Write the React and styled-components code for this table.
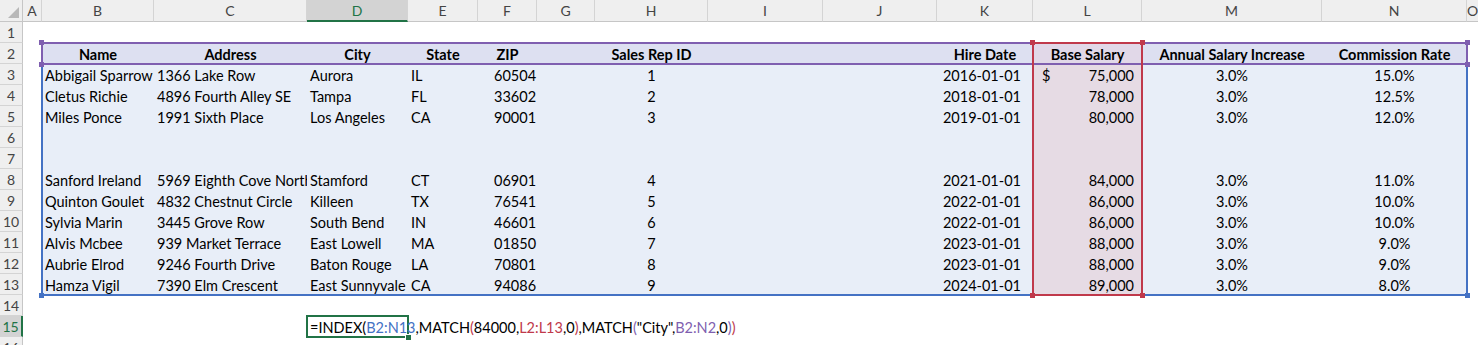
import React from 'react';
import styled, { createGlobalStyle, css } from 'styled-components';

const GlobalStyle = createGlobalStyle`
  body {
    margin: 0;
    background: #fff;
    font-family: 'Lato', 'Liberation Sans', sans-serif;
    color: #000;
  }
`;

// column widths: row numbers, then A..O
const COL_WIDTHS = [23, 19, 112, 153, 101, 70, 59, 58, 113, 115, 114, 96, 109, 180, 145];
const LETTERS = ['A', 'B', 'C', 'D', 'E', 'F', 'G', 'H', 'I', 'J', 'K', 'L', 'M', 'N', 'O'];

const BLUE = '#4472c4';
const RED = '#c0394b';
const PURPLE = '#7f5fb0';
const EXCEL_GREEN = '#217346';

const gridTracks = css`
  display: grid;
  grid-template-columns: ${COL_WIDTHS.map((w) => `${w}px`).join(' ')} 1fr;
  grid-template-rows: 22px;
  grid-auto-rows: 21px;
`;

const Viewport = styled.div`
  position: relative;
  width: 1478px;
  height: 345px;
  overflow: hidden;
`;

const Sheet = styled.div`
  ${gridTracks}
  font-size: 14.5px;
`;

// range outlines and the selection sit on a second grid laid over the cells
const OverlayGrid = styled.div`
  ${gridTracks}
  position: absolute;
  inset: 0;
  pointer-events: none;
`;

const Corner = styled.div`
  position: relative;
  background: #efefef;
  border-right: 1px solid #c6c6c6;
  border-bottom: 1px solid #c6c6c6;
  &::after {
    content: '';
    position: absolute;
    right: 3px;
    bottom: 3px;
    border-left: 11px solid transparent;
    border-bottom: 11px solid #b8b8b8;
  }
`;

const ColHead = styled.div`
  display: flex;
  align-items: center;
  justify-content: center;
  background: ${(p) => (p.$active ? '#d3d3d3' : '#efefef')};
  color: ${(p) => (p.$active ? EXCEL_GREEN : '#444')};
  border-right: 1px solid #d4d4d4;
  border-bottom: ${(p) => (p.$active ? `2px solid ${EXCEL_GREEN}` : '1px solid #c6c6c6')};
  font-size: 14px;
`;

const RowHead = styled.div`
  display: flex;
  align-items: center;
  justify-content: center;
  background: ${(p) => (p.$active ? '#d3d3d3' : '#efefef')};
  color: ${(p) => (p.$active ? EXCEL_GREEN : '#444')};
  border-right: ${(p) => (p.$active ? `2px solid ${EXCEL_GREEN}` : '1px solid #c6c6c6')};
  border-bottom: 1px solid #d4d4d4;
  font-size: 14px;
  box-sizing: border-box;
`;

const Cell = styled.div`
  display: flex;
  align-items: center;
  justify-content: ${(p) => p.$align || 'flex-start'};
  padding: 1px ${(p) => p.$padR ?? 3}px 0 ${(p) => p.$padL ?? 3}px;
  background: ${(p) => p.$fill || 'transparent'};
  font-weight: ${(p) => (p.$bold ? 700 : 400)};
  white-space: nowrap;
  overflow: hidden;
  min-width: 0;
  box-sizing: border-box;
`;

const FormulaCell = styled.div`
  position: relative;
  z-index: 1;
  display: flex;
  align-items: center;
  padding: 1px 0 0 3px;
  white-space: nowrap;
`;

const Accounting = styled(Cell)`
  justify-content: space-between;
  padding: 1px 8px 0 9px;
`;

const Ref = styled.span`
  color: ${(p) => p.$color};
`;

const RangeBox = styled.div`
  position: relative;
  grid-column: ${(p) => p.$cols};
  grid-row: ${(p) => p.$rows};
  &::before {
    content: '';
    position: absolute;
    inset: -1px;
    border: 2px solid ${(p) => p.$color};
  }
`;

const Handle = styled.span`
  position: absolute;
  z-index: 1;
  width: 5px;
  height: 5px;
  background: ${(p) => p.$color};
  ${(p) => (p.$top ? 'top: -3px;' : 'bottom: -3px;')}
  ${(p) => (p.$left ? 'left: -3px;' : 'right: -3px;')}
`;

const ActiveCell = styled.div`
  position: relative;
  grid-column: 5 / 6;
  grid-row: 16 / 17;
  &::before {
    content: '';
    position: absolute;
    inset: -1px;
    border: 2px solid ${EXCEL_GREEN};
  }
`;

const FillHandle = styled.span`
  position: absolute;
  right: -4px;
  bottom: -4px;
  width: 5px;
  height: 5px;
  background: ${EXCEL_GREEN};
  border: 1px solid #fff;
`;

const HEADERS = ['Name', 'Address', 'City', 'State', 'ZIP', '', 'Sales Rep ID', '', '', 'Hire Date', 'Base Salary', 'Annual Salary Increase', 'Commission Rate'];

const PEOPLE = [
  ['Abbigail Sparrow', '1366 Lake Row', 'Aurora', 'IL', '60504', '1', '2016-01-01', '75,000', '3.0%', '15.0%'],
  ['Cletus Richie', '4896 Fourth Alley SE', 'Tampa', 'FL', '33602', '2', '2018-01-01', '78,000', '3.0%', '12.5%'],
  ['Miles Ponce', '1991 Sixth Place', 'Los Angeles', 'CA', '90001', '3', '2019-01-01', '80,000', '3.0%', '12.0%'],
  null,
  null,
  ['Sanford Ireland', '5969 Eighth Cove North', 'Stamford', 'CT', '06901', '4', '2021-01-01', '84,000', '3.0%', '11.0%'],
  ['Quinton Goulet', '4832 Chestnut Circle', 'Killeen', 'TX', '76541', '5', '2022-01-01', '86,000', '3.0%', '10.0%'],
  ['Sylvia Marin', '3445 Grove Row', 'South Bend', 'IN', '46601', '6', '2022-01-01', '86,000', '3.0%', '10.0%'],
  ['Alvis Mcbee', '939 Market Terrace', 'East Lowell', 'MA', '01850', '7', '2023-01-01', '88,000', '3.0%', '9.0%'],
  ['Aubrie Elrod', '9246 Fourth Drive', 'Baton Rouge', 'LA', '70801', '8', '2023-01-01', '88,000', '3.0%', '9.0%'],
  ['Hamza Vigil', '7390 Elm Crescent', 'East Sunnyvale', 'CA', '94086', '9', '2024-01-01', '89,000', '3.0%', '8.0%'],
];

const FILL = { header: '#dde0f1', body: '#e8eef8', salaryHead: '#e1d8e8', salary: '#e6dbe4' };

// how each table column (B..N) lays out its values
const LAYOUT = [
  { key: 0 },
  { key: 1 },
  { key: 2 },
  { key: 3 },
  { key: 4, padL: 16 },
  { key: null },
  { key: 5, align: 'center' },
  { key: null },
  { key: null },
  { key: 6, align: 'flex-end', padR: 12 },
  { key: 7, money: true },
  { key: 8, align: 'center' },
  { key: 9, align: 'center' },
];

function tableRow(rowIdx) {
  const isHeader = rowIdx === 2;
  const record = isHeader ? null : PEOPLE[rowIdx - 3];
  return LAYOUT.map((col, i) => {
    const key = `${rowIdx}-${i}`;
    const salaryCol = !!col.money;
    const fill = isHeader
      ? salaryCol ? FILL.salaryHead : FILL.header
      : salaryCol ? FILL.salary : FILL.body;

    if (isHeader) {
      return (
        <Cell key={key} $fill={fill} $bold $align="center">
          {HEADERS[i]}
        </Cell>
      );
    }
    const value = record && col.key !== null ? record[col.key] : '';
    if (col.money) {
      return (
        <Accounting key={key} $fill={fill}>
          <span>{rowIdx === 3 ? '$' : ''}</span>
          <span>{value}</span>
        </Accounting>
      );
    }
    return (
      <Cell key={key} $fill={fill} $align={col.align} $padL={col.padL} $padR={col.padR}>
        {value}
      </Cell>
    );
  });
}

const Formula = () => (
  <FormulaCell>
    =INDEX(<Ref $color={BLUE}>B2:N13</Ref>,MATCH<Ref $color={RED}>(</Ref>84000,
    <Ref $color={RED}>L2:L13</Ref>,0<Ref $color={RED}>)</Ref>,MATCH<Ref $color={PURPLE}>(</Ref>"City",
    <Ref $color={PURPLE}>B2:N2</Ref>,0<Ref $color={PURPLE}>)</Ref><Ref $color={RED}>)</Ref>
  </FormulaCell>
);

const Corners = ({ color, top = true }) => (
  <>
    {top && <Handle $color={color} $top $left />}
    {top && <Handle $color={color} $top />}
    <Handle $color={color} $left />
    <Handle $color={color} />
  </>
);

export default function App() {
  const rows = [];
  for (let r = 1; r <= 16; r++) {
    const inTable = r >= 2 && r <= 13;
    rows.push(
      <RowHead key={`h${r}`} $active={r === 15}>{r}</RowHead>,
      <Cell key={`a${r}`} />,
    );
    if (inTable) {
      rows.push(...tableRow(r));
    } else if (r === 15) {
      rows.push(<Cell key="b15" />, <Cell key="c15" />, <Formula key="d15" />);
      for (let c = 0; c < 10; c++) rows.push(<Cell key={`r15-${c}`} />);
    } else {
      for (let c = 0; c < 13; c++) rows.push(<Cell key={`e${r}-${c}`} />);
    }
    rows.push(<Cell key={`o${r}`} />);
  }

  return (
    <>
      <GlobalStyle />
      <Viewport>
        <Sheet>
          <Corner />
          {LETTERS.map((l) => (
            <ColHead key={l} $active={l === 'D'}>{l}</ColHead>
          ))}
          {rows}
        </Sheet>
        <OverlayGrid>
          <RangeBox $cols="3 / 16" $rows="3 / 15" $color={BLUE}>
            <Corners color={BLUE} top={false} />
          </RangeBox>
          <RangeBox $cols="3 / 16" $rows="3 / 4" $color={PURPLE}>
            <Corners color={PURPLE} />
          </RangeBox>
          <RangeBox $cols="13 / 14" $rows="3 / 15" $color={RED}>
            <Corners color={RED} />
          </RangeBox>
          <ActiveCell>
            <FillHandle />
          </ActiveCell>
        </OverlayGrid>
      </Viewport>
    </>
  );
}
